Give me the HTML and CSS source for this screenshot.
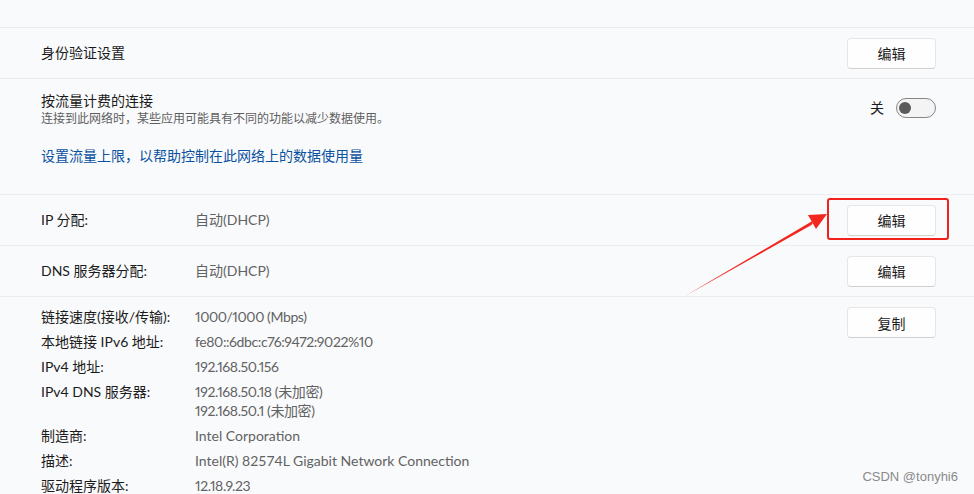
FILE: index.html
```html
<!DOCTYPE html>
<html lang="zh-CN">
<head>
<meta charset="utf-8">
<title>网络属性</title>
<link rel="stylesheet" href="styles.css">
</head>
<body>
<div class="page">
  <div class="top-gap"></div>

  <div class="row row-simple">
    <div class="label-main">身份验证设置</div>
    <button class="btn">编辑</button>
  </div>

  <div class="row row-metered">
    <div class="metered-head">
      <div class="metered-text">
        <div class="label-main">按流量计费的连接</div>
        <div class="sub">连接到此网络时，某些应用可能具有不同的功能以减少数据使用。</div>
      </div>
      <div class="toggle-wrap">
        <span class="toggle-label">关</span>
        <span class="toggle"><span class="knob"></span></span>
      </div>
    </div>
    <a class="link" href="#">设置流量上限，以帮助控制在此网络上的数据使用量</a>
  </div>

  <div class="row row-simple">
    <div class="kv">
      <span class="k">IP 分配:</span>
      <span class="v">自动(DHCP)</span>
    </div>
    <button class="btn">编辑</button>
  </div>

  <div class="row row-simple">
    <div class="kv">
      <span class="k">DNS 服务器分配:</span>
      <span class="v">自动(DHCP)</span>
    </div>
    <button class="btn">编辑</button>
  </div>

  <div class="row row-props">
    <dl class="props">
      <dt>链接速度(接收/传输):</dt><dd class="num">1000/1000 (Mbps)</dd>
      <dt>本地链接 IPv6 地址:</dt><dd class="num">fe80::6dbc:c76:9472:9022%10</dd>
      <dt>IPv4 地址:</dt><dd class="num">192.168.50.156</dd>
      <dt>IPv4 DNS 服务器:</dt><dd class="num">192.168.50.18 (未加密)<br>192.168.50.1 (未加密)</dd>
      <dt>制造商:</dt><dd>Intel Corporation</dd>
      <dt>描述:</dt><dd>Intel(R) 82574L Gigabit Network Connection</dd>
      <dt>驱动程序版本:</dt><dd class="num">12.18.9.23</dd>
    </dl>
    <button class="btn">复制</button>
  </div>
</div>

<div class="highlight"></div>
<svg class="arrow" width="974" height="494" viewBox="0 0 974 494" xmlns="http://www.w3.org/2000/svg">
  <polygon points="685,296 811.5,225 814.5,219.8" fill="#f2281f"/>
  <polygon points="827,214 816,229 808,215" fill="#f2281f"/>
</svg>
<div class="watermark">CSDN @tonyhi6</div>
</body>
</html>
```

FILE: styles.css
```css
html, body {
  margin: 0;
  padding: 0;
}
body {
  background: #f9fafc;
  font-family: Lato, "Noto Sans CJK SC", sans-serif;
  font-size: 14px;
  color: #1b1b1b;
  width: 974px;
  height: 494px;
  overflow: hidden;
  position: relative;
}
.page {
  display: flex;
  flex-direction: column;
}
.top-gap {
  height: 27px;
}
.row {
  border-top: 1px solid #eaecf0;
  padding: 0 38px 0 41px;
}
.row-simple {
  height: 50px;
  display: flex;
  align-items: center;
  justify-content: space-between;
}
.label-main {
  font-size: 14px;
  line-height: 20px;
  color: #1b1b1b;
}
.btn {
  width: 89px;
  height: 31px;
  box-sizing: border-box;
  background: #fefefe;
  border: 1px solid #e6e6e6;
  border-bottom-color: #d0d0d0;
  border-radius: 4px;
  font-family: "Noto Sans CJK SC", sans-serif;
  font-size: 14px;
  color: #1b1b1b;
  padding: 0;
  flex: none;
}
.row-metered {
  padding-top: 12px;
  padding-bottom: 28px;
  display: flex;
  flex-direction: column;
}
.metered-head {
  display: flex;
  justify-content: space-between;
  align-items: flex-start;
}
.sub {
  font-size: 12px;
  line-height: 16px;
  color: #5e5e5e;
}
.toggle-wrap {
  display: flex;
  align-items: center;
  gap: 12px;
  margin-top: 7px;
}
.toggle-label {
  font-size: 14px;
  line-height: 20px;
  color: #1b1b1b;
}
.toggle {
  width: 40px;
  height: 20px;
  box-sizing: border-box;
  border: 1px solid #858585;
  border-radius: 10px;
  background: #f4f4f5;
  display: flex;
  align-items: center;
  padding-left: 2px;
}
.knob {
  width: 12px;
  height: 12px;
  border-radius: 50%;
  background: #5b5b5b;
}
.link {
  margin-top: 19px;
  font-size: 14px;
  line-height: 20px;
  color: #0a51a0;
  text-decoration: none;
  align-self: flex-start;
}
.kv {
  display: flex;
  align-items: center;
  line-height: 20px;
}
.k {
  width: 154px;
  color: #1b1b1b;
}
.v {
  color: #626262;
}
.row-props {
  display: flex;
  justify-content: space-between;
  align-items: flex-start;
  padding-top: 10px;
}
.props {
  margin: 0;
  display: grid;
  grid-template-columns: 154px auto;
  row-gap: 6px;
  line-height: 19px;
}
.props dt {
  color: #1b1b1b;
}
.props dd {
  margin: 0;
  color: #626262;
}
.props .num {
  font-variant-numeric: proportional-nums;
  letter-spacing: -0.4px;
}
.highlight {
  position: absolute;
  left: 827px;
  top: 198px;
  width: 122px;
  height: 42px;
  box-sizing: border-box;
  border: 2px solid #f2211c;
  border-radius: 3px;
}
.arrow {
  position: absolute;
  left: 0;
  top: 0;
  pointer-events: none;
}
.watermark {
  position: absolute;
  right: 16px;
  top: 469px;
  font-family: "Liberation Sans", sans-serif;
  font-size: 13px;
  line-height: 16px;
  color: #8a8a8a;
}
```
